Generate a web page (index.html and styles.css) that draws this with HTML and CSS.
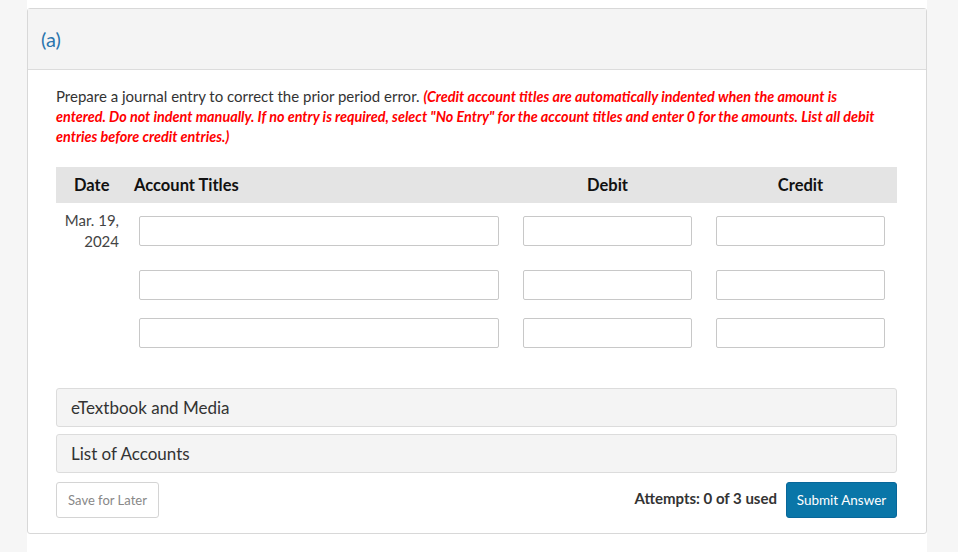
FILE: index.html
```html
<!DOCTYPE html>
<html lang="en">
<head>
  <meta charset="UTF-8">
  <meta name="viewport" content="width=device-width, initial-scale=1.0">
  <title>Journal Entry</title>
  <link rel="stylesheet" href="styles.css">
</head>
<body>
  <div class="page">
    <div class="question-card">
      <div class="card-header">(a)</div>
      <div class="card-body">
        <p class="prompt">Prepare a journal entry to correct the prior period error. <em class="hint">(Credit account titles are automatically indented when the amount is entered. Do not indent manually. If no entry is required, select "No Entry" for the account titles and enter 0 for the amounts. List all debit entries before credit entries.)</em></p>

        <div class="journal">
          <div class="journal-head">
            <div class="col-date">Date</div>
            <div class="col-title">Account Titles</div>
            <div class="col-amount">Debit</div>
            <div class="col-amount">Credit</div>
          </div>
          <div class="journal-row">
            <div class="col-date">Mar. 19,<br>2024</div>
            <input class="field" type="text">
            <input class="field" type="text">
            <input class="field" type="text">
          </div>
          <div class="journal-row">
            <div class="col-date"></div>
            <input class="field" type="text">
            <input class="field" type="text">
            <input class="field" type="text">
          </div>
          <div class="journal-row">
            <div class="col-date"></div>
            <input class="field" type="text">
            <input class="field" type="text">
            <input class="field" type="text">
          </div>
        </div>

        <div class="panel">eTextbook and Media</div>
        <div class="panel">List of Accounts</div>

        <div class="actions">
          <button class="save-button">Save for Later</button>
          <div class="submit-group">
            <span class="attempts">Attempts: 0 of 3 used</span>
            <button class="submit-button">Submit Answer</button>
          </div>
        </div>
      </div>
    </div>
  </div>
</body>
</html>
```

FILE: styles.css
```css
body {
  font-family: Lato, "Open Sans", Arial, sans-serif;
  background-color: #f6f6f6;
  color: #333;
  margin: 0;
  height: 552px;
}
.page {
  margin-left: 27px;
  width: 900px;
  min-height: 552px;
  background-color: white;
  padding-top: 8px;
  box-sizing: border-box;
}
.question-card {
  border: 1px solid #d8d8d8;
  border-radius: 3px;
}
.card-header {
  height: 60px;
  line-height: 60px;
  background-color: #f4f4f4;
  border-bottom: 1px solid #dcdcdc;
  padding-left: 13px;
  font-size: 20px;
  color: #2a74ad;
}
.card-body {
  padding: 16px 29px 15px 28px;
}
.prompt {
  margin: 0;
  max-width: 828px;
  font-size: 15px;
  line-height: 20px;
  color: #333;
}
.hint {
  color: #ff0000;
  font-weight: bold;
  font-size: 14.4px;
  line-height: 18px;
}
.journal {
  margin-top: 21px;
}
.journal-head,
.journal-row {
  display: grid;
  grid-template-columns: 59px 360px 169px 169px;
  column-gap: 24px;
  padding-right: 12px;
}
.journal-head {
  height: 36px;
  line-height: 36px;
  background-color: #e4e4e4;
  font-size: 16.5px;
  font-weight: bold;
  color: #111;
}
.journal-head .col-date {
  padding-left: 18px;
}
.journal-head .col-title {
  margin-left: -5px;
}
.col-amount {
  text-align: center;
}
.journal-row {
  padding: 7px 0 5px;
  align-items: start;
}
.journal-row .col-date {
  text-align: right;
  font-size: 15px;
  line-height: 21px;
  color: #444;
  margin-right: -4px;
}
.field {
  margin-top: 6px;
  height: 30px;
  box-sizing: border-box;
  border: 1px solid #c8c8c8;
  border-radius: 2px;
  background-color: white;
  font-family: inherit;
  font-size: 14px;
  padding: 0 6px;
}
.panel {
  height: 37px;
  line-height: 37px;
  background-color: #f4f4f4;
  border: 1px solid #dcdcdc;
  border-radius: 3px;
  padding-left: 14px;
  font-size: 17px;
  color: #333;
  margin-bottom: 7px;
}
.journal + .panel {
  margin-top: 35px;
}
.actions {
  display: flex;
  justify-content: space-between;
  align-items: center;
  margin-top: 9px;
}
.save-button {
  height: 36px;
  width: 103px;
  background-color: white;
  border: 1px solid #d4d4d4;
  border-radius: 3px;
  font-family: inherit;
  font-size: 13px;
  color: #888;
  cursor: pointer;
}
.submit-group {
  display: flex;
  align-items: center;
  gap: 9px;
}
.attempts {
  font-size: 15px;
  font-weight: bold;
  color: #333;
  margin-top: -4px;
}
.submit-button {
  height: 36px;
  width: 111px;
  background-color: #0a76a8;
  color: white;
  border: 1px solid #08679a;
  border-radius: 3px;
  font-family: inherit;
  font-size: 13.5px;
  cursor: pointer;
}
.submit-button:hover {
  background-color: #06628d;
}
```
